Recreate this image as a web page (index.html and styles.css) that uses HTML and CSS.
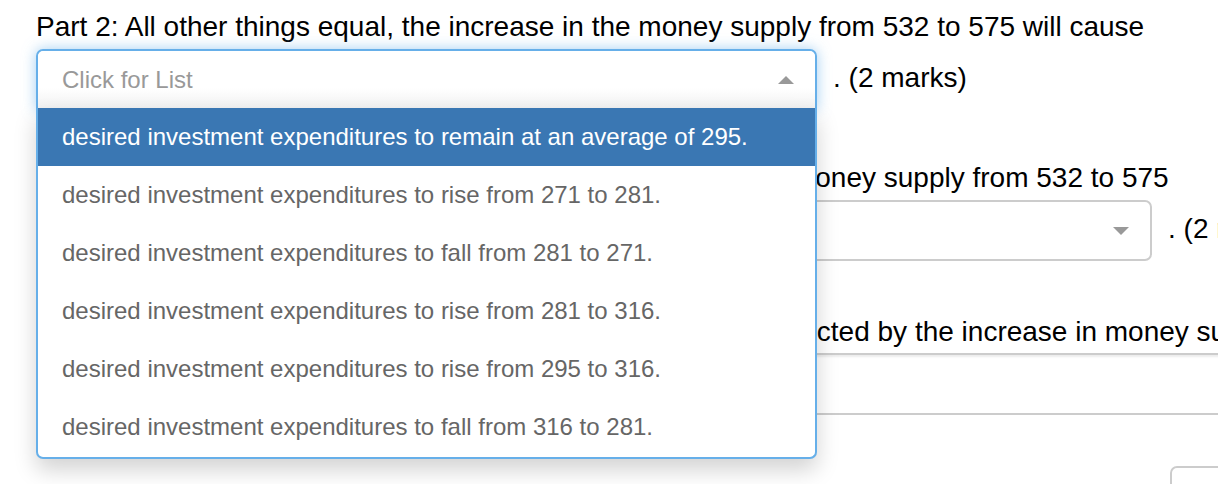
FILE: index.html
```
<!doctype html>
<html lang="en">
  <head>
    <meta charset="UTF-8" />
    <meta name="viewport" content="width=device-width, initial-scale=1.0" />
    <title>Money Supply Question</title>
    <link rel="stylesheet" href="styles.css">
  </head>
  <body>
    <div class="quiz">
      <div class="question">
        <p class="prompt">Part 2: All other things equal, the increase in the money supply from 532 to 575 will cause</p>
        <div class="answer">
          <div class="select select-open">
            <div class="select-choice">
              <span class="placeholder">Click for List</span>
              <span class="caret caret-up"></span>
            </div>
            <ul class="select-results">
              <li class="highlighted">desired investment expenditures to remain at an average of 295.</li>
              <li>desired investment expenditures to rise from 271 to 281.</li>
              <li>desired investment expenditures to fall from 281 to 271.</li>
              <li>desired investment expenditures to rise from 281 to 316.</li>
              <li>desired investment expenditures to rise from 295 to 316.</li>
              <li>desired investment expenditures to fall from 316 to 281.</li>
            </ul>
          </div>
          <span class="marks">. (2 marks)</span>
        </div>
      </div>

      <div class="question">
        <p class="prompt">Part 3: All other things equal, the effect of the increase in the money supply from 532 to 575</p>
        <div class="answer">
          <div class="select select-wide">
            <div class="select-choice">
              <span class="placeholder"></span>
              <span class="caret"></span>
            </div>
          </div>
          <span class="marks">. (2 marks)</span>
        </div>
      </div>

      <div class="question">
        <p class="prompt">Part 4: Describe how planned investment expenditures are affected by the increase in money supply.</p>
        <input class="text-input" type="text" />
      </div>

      <div class="actions">
        <button class="btn" type="button">Check Answer</button>
      </div>
    </div>
  </body>
</html>
```

FILE: styles.css
```
:root {
  --text-color: #000;
  --option-color: #666;
  --muted: #999;
  --border-color: #ccc;
  --focus-color: #66afe9;
  --highlight: #3a77b3;
}

* {
  margin: 0;
  padding: 0;
  box-sizing: border-box;
}

body {
  font-family: 'Liberation Sans', Arial, sans-serif;
  font-size: 28px;
  line-height: 37px;
  color: var(--text-color);
  background-color: white;
  overflow: hidden;
}

.quiz {
  width: 1600px;
  padding: 8px 0 0 36px;
}

.question {
  margin-bottom: 51px;
}

.question:first-child {
  margin-bottom: 49px;
}

.question:nth-child(2) {
  margin-bottom: 52px;
}

.prompt {
  white-space: nowrap;
  margin-bottom: 4px;
}

.answer {
  display: flex;
  align-items: flex-start;
  gap: 16px;
}

.marks {
  white-space: nowrap;
  margin-top: 10px;
}

/* select box */
.select {
  position: relative;
  width: 781px;
  height: 61px;
  border: 2px solid var(--border-color);
  border-radius: 7px;
  background-color: white;
  font-size: 24px;
}

.select-wide {
  width: 1116px;
}

.select-choice {
  height: 100%;
  display: flex;
  align-items: center;
  justify-content: space-between;
  padding: 0 21px 0 24px;
}

.placeholder {
  color: var(--muted);
}

.caret {
  width: 0;
  height: 0;
  border-left: 8px solid transparent;
  border-right: 8px solid transparent;
  border-top: 8px solid var(--muted);
}

.caret-up {
  border-top: 0;
  border-bottom: 8px solid var(--muted);
}

.select-open {
  border-color: var(--focus-color);
  border-radius: 7px 7px 0 0;
  box-shadow: 0 0 14px rgba(102, 175, 233, 0.6);
  z-index: 10;
}

.select-open .select-choice {
  background-image: linear-gradient(#fff 65%, #f2f2f2);
  border-radius: 6px 6px 0 0;
}

.select-results {
  position: absolute;
  top: 57px;
  left: -2px;
  right: -2px;
  list-style: none;
  background-color: white;
  border: 2px solid var(--focus-color);
  border-top: 0;
  border-radius: 0 0 7px 7px;
  padding-bottom: 1px;
  box-shadow: 0 11px 22px rgba(0, 0, 0, 0.175);
}

.select-results li {
  height: 58px;
  line-height: 58px;
  padding: 0 22px 0 24px;
  color: var(--option-color);
  white-space: nowrap;
}

.select-results li.highlighted {
  background-color: var(--highlight);
  color: white;
}

/* free text answer */
.text-input {
  display: block;
  width: 1400px;
  height: 62px;
  margin-top: -1px;
  border: 2px solid var(--border-color);
  border-radius: 7px;
  box-shadow: inset 0 2px 2px rgba(0, 0, 0, 0.075);
  font: inherit;
  padding: 0 22px;
}

.actions {
  padding-left: 1134px;
}

.btn {
  font: inherit;
  color: #333;
  background-color: white;
  border: 2px solid var(--border-color);
  border-radius: 7px;
  padding: 11px 22px;
}
```
